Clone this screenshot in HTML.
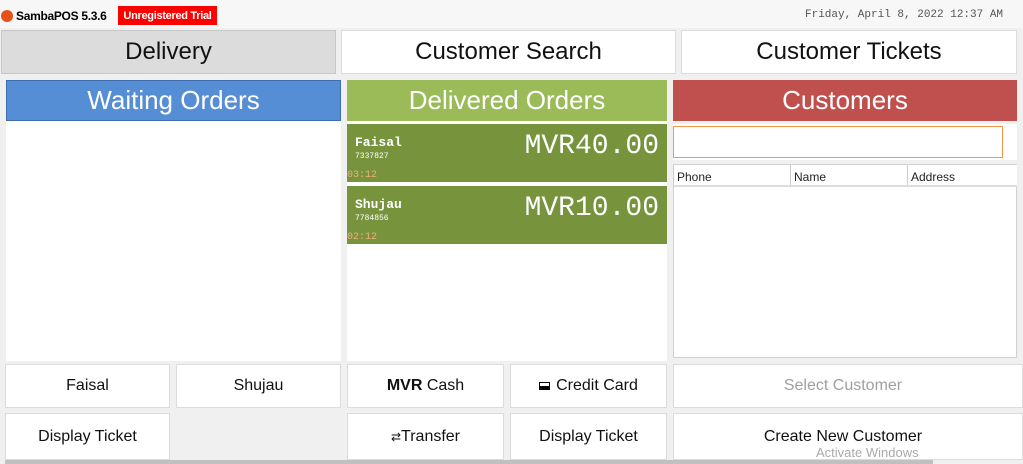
<!DOCTYPE html><html><head><style>
body{margin:0;width:1023px;height:464px;overflow:hidden;background:#f0f0f0;font-family:"Liberation Sans",sans-serif;position:relative}
div{position:absolute;box-sizing:border-box}
.b{background:#fff;border:1px solid #dcdcdc;display:flex;align-items:center;justify-content:center;font-size:16px;color:#111}
.t{font-size:24px}
.h{color:#fff;font-size:26px;display:flex;align-items:center;justify-content:center;font-weight:300}
.card{background:#77933c;color:#fff;font-family:"Liberation Mono",monospace}
</style></head><body>
<div style="left:0;top:0;width:1023px;height:28px;background:#f7f7f7"></div>
<div style="left:1px;top:10px;width:12px;height:12px;border-radius:50%;background:#e8501a"></div>
<div style="left:16px;top:9px;font-size:12px;font-weight:bold;color:#000;letter-spacing:-0.3px;white-space:nowrap">SambaPOS 5.3.6</div>
<div style="left:118px;top:6px;width:99px;height:19px;background:#f00;color:#fff;font-size:11px;font-weight:bold;display:flex;align-items:center;justify-content:center;white-space:nowrap;letter-spacing:-0.3px">Unregistered Trial</div>
<div style="left:805px;top:9px;font-family:'Liberation Mono',monospace;font-size:11px;color:#555">Friday, April 8, 2022 12:37 AM</div>
<div class="b t" style="left:1px;top:30px;width:335px;height:44px;background:#dcdcdc;border-color:#c8c8c8">Delivery</div>
<div class="b t" style="left:341px;top:30px;width:335px;height:44px">Customer Search</div>
<div class="b t" style="left:681px;top:30px;width:336px;height:44px">Customer Tickets</div>
<div style="left:6px;top:121px;width:335px;height:240px;background:#fff"></div>
<div style="left:347px;top:121px;width:320px;height:240px;background:#fff"></div>
<div class="h" style="left:6px;top:80px;width:335px;height:41px;background:#558ed5;border:1px solid #3d6fb0">Waiting Orders</div>
<div class="h" style="left:347px;top:80px;width:320px;height:41px;background:#9bbb59">Delivered Orders</div>
<div class="h" style="left:673px;top:80px;width:344px;height:41px;background:#c0504d">Customers</div>
<div class="card" style="left:347px;top:124px;width:320px;height:58px">
<div style="left:8px;top:11px;font-size:13px;font-weight:bold">Faisal</div><div style="left:8px;top:28px;font-size:8px">7337827</div>
<div style="right:8px;top:7px;font-size:28px">MVR40.00</div><div style="left:0;top:46px;font-size:10px;color:#f0b080">03:12</div></div>
<div class="card" style="left:347px;top:186px;width:320px;height:58px">
<div style="left:8px;top:11px;font-size:13px;font-weight:bold">Shujau</div><div style="left:8px;top:28px;font-size:8px">7784856</div>
<div style="right:8px;top:7px;font-size:28px">MVR10.00</div><div style="left:0;top:46px;font-size:10px;color:#f0b080">02:12</div></div>
<div style="left:673px;top:124px;width:344px;height:36px;background:#fff"></div>
<div style="left:673px;top:126px;width:330px;height:32px;background:#fff;border:1px solid #f79646"></div>
<div style="left:673px;top:164px;width:344px;height:194px;background:#fff;border:1px solid #d0d0d0"></div>
<div style="left:674px;top:165px;width:343px;height:22px;background:#fff;border-bottom:2px solid #ddd;font-size:12px;color:#222">
<div style="left:3px;top:5px">Phone</div><div style="left:116px;top:0;height:20px;border-left:1px solid #ccc"></div>
<div style="left:120px;top:5px">Name</div><div style="left:233px;top:0;height:20px;border-left:1px solid #ccc"></div>
<div style="left:237px;top:5px">Address</div></div>
<div class="b" style="left:5px;top:364px;width:165px;height:44px">Faisal</div>
<div class="b" style="left:176px;top:364px;width:165px;height:44px">Shujau</div>
<div class="b" style="left:347px;top:364px;width:157px;height:44px"><b>MVR</b>&nbsp;Cash</div>
<div class="b" style="left:510px;top:364px;width:157px;height:44px"><span style="display:inline-block;width:11px;height:8px;border:1px solid #000;border-bottom:4px solid #000;box-sizing:border-box;margin-right:6px"></span>Credit Card</div>
<div class="b" style="left:673px;top:364px;width:350px;height:44px;color:#a0a0a0;padding-right:10px">Select Customer</div>
<div class="b" style="left:5px;top:413px;width:165px;height:47px">Display Ticket</div>
<div class="b" style="left:347px;top:413px;width:157px;height:47px"><span style="font-size:12px">⇄</span>Transfer</div>
<div class="b" style="left:510px;top:413px;width:157px;height:47px">Display Ticket</div>
<div class="b" style="left:673px;top:413px;width:350px;height:47px;padding-right:10px">Create New Customer</div>
<div style="left:816px;top:445px;font-size:13px;color:#aaa">Activate Windows</div>
<div style="left:5px;top:460px;width:928px;height:4px;background:#c0c0c0"></div>
</body></html>
